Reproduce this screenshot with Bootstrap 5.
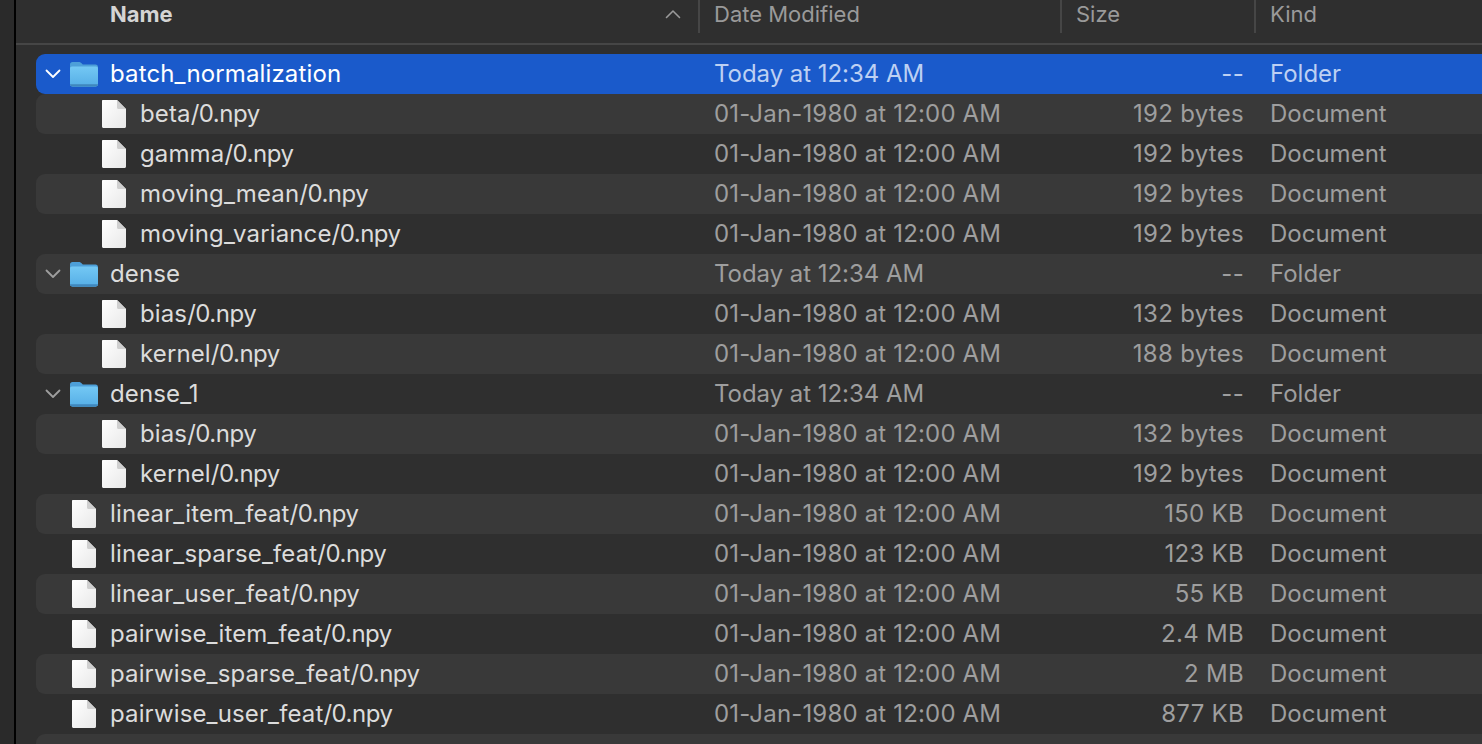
<!DOCTYPE html>
<html lang="en">
<head>
<meta charset="utf-8">
<title>Finder list</title>
<link href="https://cdn.jsdelivr.net/npm/bootstrap@5.3.0/dist/css/bootstrap.min.css" rel="stylesheet">
<style>
html,body{height:100%;overflow:hidden;background:#2f2f2f;}
body{font-family:Inter,"Liberation Sans",sans-serif;font-size:24px;color:#dcdcdc;letter-spacing:.13px;}
.fx-rail{width:16px;background:#2a2a2a;border-right:2px solid #000;flex:none;}
.fx-main{flex:1;min-width:0;}
.fx-head{height:45px;border-bottom:2px solid #464646;color:#9a9a9a;font-size:22px;padding-left:20px;letter-spacing:0;}
.fx-h{height:33px;display:flex;align-items:center;border-left:2px solid #464646;padding-left:14px;padding-bottom:5px;}
.fx-hname{width:662px;border:0;padding-left:74px;color:#d4d4d4;font-weight:700;justify-content:space-between;padding-right:17px;}
.fx-hdate{width:362px;}.fx-hsize{width:194px;}.fx-hkind{flex:1;}
.fx-list{padding-top:9px;padding-left:20px;}
.fx-row{height:40px;display:flex;align-items:center;border-radius:9px 0 0 9px;}
.fx-row:nth-child(even){background:#393939;}
.fx-sel{background:#1a5acb!important;color:#fff;}
.fx-sel .fx-dim{color:#bdd0f3;}
.fx-name{width:678px;display:flex;align-items:center;flex:none;}
.fx-chev{width:34px;flex:none;display:flex;justify-content:center;}
.fx-l0{padding-left:36px;}
.fx-l1{padding-left:66px;}
.fx-doc{margin-right:14px;flex:none;}
.fx-fold{margin-right:12px;flex:none;}
.fx-dim{color:#9e9e9e;}
.fx-date{width:389px;flex:none;letter-spacing:.17px;}
.fx-today{letter-spacing:-.04px;}
.fx-ext{letter-spacing:-.5px;}
.fx-size{width:141px;text-align:right;flex:none;letter-spacing:.3px;}
.fx-kind{padding-left:26px;letter-spacing:0;}
</style>
</head>
<body>
<svg width="0" height="0" class="position-absolute">
<defs>
<linearGradient id="gf" x1="0" y1="0" x2="0" y2="1"><stop offset="0" stop-color="#74c8f4"/><stop offset="1" stop-color="#55aee6"/></linearGradient>
<linearGradient id="gd" x1="0" y1="0" x2="1" y2="1"><stop offset="0" stop-color="#ffffff"/><stop offset="1" stop-color="#e8e8e8"/></linearGradient>
<symbol id="ic-folder" viewBox="0 0 28 28">
<path d="M0 4.500C0 3 1 2 2.500 2H9c1 0 1.600.4 2.300 1.100L12.800 4.500H25.500C27 4.500 28 5.500 28 7V24C28 25.500 27 26.500 25.500 26.500H2.500C1 26.500 0 25.500 0 24Z" fill="#4d9fd8"/>
<path d="M0 8.500C0 7.300.8 6.500 2 6.500H26C27.200 6.500 28 7.300 28 8.500V24C28 25.500 27 26.500 25.500 26.500H2.500C1 26.500 0 25.500 0 24Z" fill="url(#gf)"/>
<path d="M0 24.300C0 25.500 1 26.500 2.500 26.500H25.500C27 26.500 28 25.500 28 24.300Z" fill="#3f87bd"/>
</symbol>
<symbol id="ic-doc" viewBox="0 0 24 28">
<path d="M1 0H15L24 9V26.500C24 27.300 23.300 28 22.500 28H1.500C.7 28 0 27.300 0 26.500V1C0 .4.400 0 1 0Z" fill="url(#gd)"/>
<path d="M15 0L24 9H16.200C15.500 9 15 8.500 15 7.800Z" fill="#cfcfcf"/>
</symbol>
<symbol id="ic-chev" viewBox="0 0 16 10"><path d="M1.500 1.500L8 8L14.500 1.500" fill="none" stroke="currentColor" stroke-width="1.800" stroke-linecap="round" stroke-linejoin="round"/></symbol>
</defs>
</svg>
<div class="d-flex h-100">
<div class="fx-rail"></div>
<div class="fx-main">
<div class="fx-head d-flex w-100">
<div class="fx-h fx-hname"><span>Name</span><svg width="16" height="10" viewBox="0 0 16 10"><path d="M1.500 8.500L8 2L14.500 8.500" fill="none" stroke="#9a9a9a" stroke-width="1.600" stroke-linecap="round" stroke-linejoin="round"/></svg></div>
<div class="fx-h fx-hdate">Date Modified</div>
<div class="fx-h fx-hsize">Size</div>
<div class="fx-h fx-hkind">Kind</div>
</div>
<div class="fx-list">
<div class="fx-row fx-sel"><div class="fx-name"><span class="fx-chev"><svg width="16" height="10"><use href="#ic-chev"/></svg></span><svg class="fx-fold" width="28" height="28"><use href="#ic-folder"/></svg><span>batch_normalization</span></div><div class="fx-date fx-dim fx-today">Today at 12:34 AM</div><div class="fx-size fx-dim">--</div><div class="fx-kind fx-dim">Folder</div></div>
<div class="fx-row"><div class="fx-name fx-l1"><svg class="fx-doc" width="24" height="28"><use href="#ic-doc"/></svg><span>beta<span class="fx-ext">/0.npy</span></span></div><div class="fx-date fx-dim">01-Jan-1980 at 12:00 AM</div><div class="fx-size fx-dim">192 bytes</div><div class="fx-kind fx-dim">Document</div></div>
<div class="fx-row"><div class="fx-name fx-l1"><svg class="fx-doc" width="24" height="28"><use href="#ic-doc"/></svg><span>gamma<span class="fx-ext">/0.npy</span></span></div><div class="fx-date fx-dim">01-Jan-1980 at 12:00 AM</div><div class="fx-size fx-dim">192 bytes</div><div class="fx-kind fx-dim">Document</div></div>
<div class="fx-row"><div class="fx-name fx-l1"><svg class="fx-doc" width="24" height="28"><use href="#ic-doc"/></svg><span>moving_mean<span class="fx-ext">/0.npy</span></span></div><div class="fx-date fx-dim">01-Jan-1980 at 12:00 AM</div><div class="fx-size fx-dim">192 bytes</div><div class="fx-kind fx-dim">Document</div></div>
<div class="fx-row"><div class="fx-name fx-l1"><svg class="fx-doc" width="24" height="28"><use href="#ic-doc"/></svg><span>moving_variance<span class="fx-ext">/0.npy</span></span></div><div class="fx-date fx-dim">01-Jan-1980 at 12:00 AM</div><div class="fx-size fx-dim">192 bytes</div><div class="fx-kind fx-dim">Document</div></div>
<div class="fx-row"><div class="fx-name"><span class="fx-chev fx-dim"><svg width="16" height="10"><use href="#ic-chev"/></svg></span><svg class="fx-fold" width="28" height="28"><use href="#ic-folder"/></svg><span>dense</span></div><div class="fx-date fx-dim fx-today">Today at 12:34 AM</div><div class="fx-size fx-dim">--</div><div class="fx-kind fx-dim">Folder</div></div>
<div class="fx-row"><div class="fx-name fx-l1"><svg class="fx-doc" width="24" height="28"><use href="#ic-doc"/></svg><span>bias<span class="fx-ext">/0.npy</span></span></div><div class="fx-date fx-dim">01-Jan-1980 at 12:00 AM</div><div class="fx-size fx-dim">132 bytes</div><div class="fx-kind fx-dim">Document</div></div>
<div class="fx-row"><div class="fx-name fx-l1"><svg class="fx-doc" width="24" height="28"><use href="#ic-doc"/></svg><span>kernel<span class="fx-ext">/0.npy</span></span></div><div class="fx-date fx-dim">01-Jan-1980 at 12:00 AM</div><div class="fx-size fx-dim">188 bytes</div><div class="fx-kind fx-dim">Document</div></div>
<div class="fx-row"><div class="fx-name"><span class="fx-chev fx-dim"><svg width="16" height="10"><use href="#ic-chev"/></svg></span><svg class="fx-fold" width="28" height="28"><use href="#ic-folder"/></svg><span>dense_1</span></div><div class="fx-date fx-dim fx-today">Today at 12:34 AM</div><div class="fx-size fx-dim">--</div><div class="fx-kind fx-dim">Folder</div></div>
<div class="fx-row"><div class="fx-name fx-l1"><svg class="fx-doc" width="24" height="28"><use href="#ic-doc"/></svg><span>bias<span class="fx-ext">/0.npy</span></span></div><div class="fx-date fx-dim">01-Jan-1980 at 12:00 AM</div><div class="fx-size fx-dim">132 bytes</div><div class="fx-kind fx-dim">Document</div></div>
<div class="fx-row"><div class="fx-name fx-l1"><svg class="fx-doc" width="24" height="28"><use href="#ic-doc"/></svg><span>kernel<span class="fx-ext">/0.npy</span></span></div><div class="fx-date fx-dim">01-Jan-1980 at 12:00 AM</div><div class="fx-size fx-dim">192 bytes</div><div class="fx-kind fx-dim">Document</div></div>
<div class="fx-row"><div class="fx-name fx-l0"><svg class="fx-doc" width="24" height="28"><use href="#ic-doc"/></svg><span>linear_item_feat<span class="fx-ext">/0.npy</span></span></div><div class="fx-date fx-dim">01-Jan-1980 at 12:00 AM</div><div class="fx-size fx-dim">150 KB</div><div class="fx-kind fx-dim">Document</div></div>
<div class="fx-row"><div class="fx-name fx-l0"><svg class="fx-doc" width="24" height="28"><use href="#ic-doc"/></svg><span>linear_sparse_feat<span class="fx-ext">/0.npy</span></span></div><div class="fx-date fx-dim">01-Jan-1980 at 12:00 AM</div><div class="fx-size fx-dim">123 KB</div><div class="fx-kind fx-dim">Document</div></div>
<div class="fx-row"><div class="fx-name fx-l0"><svg class="fx-doc" width="24" height="28"><use href="#ic-doc"/></svg><span>linear_user_feat<span class="fx-ext">/0.npy</span></span></div><div class="fx-date fx-dim">01-Jan-1980 at 12:00 AM</div><div class="fx-size fx-dim">55 KB</div><div class="fx-kind fx-dim">Document</div></div>
<div class="fx-row"><div class="fx-name fx-l0"><svg class="fx-doc" width="24" height="28"><use href="#ic-doc"/></svg><span>pairwise_item_feat<span class="fx-ext">/0.npy</span></span></div><div class="fx-date fx-dim">01-Jan-1980 at 12:00 AM</div><div class="fx-size fx-dim">2.4 MB</div><div class="fx-kind fx-dim">Document</div></div>
<div class="fx-row"><div class="fx-name fx-l0"><svg class="fx-doc" width="24" height="28"><use href="#ic-doc"/></svg><span>pairwise_sparse_feat<span class="fx-ext">/0.npy</span></span></div><div class="fx-date fx-dim">01-Jan-1980 at 12:00 AM</div><div class="fx-size fx-dim">2 MB</div><div class="fx-kind fx-dim">Document</div></div>
<div class="fx-row"><div class="fx-name fx-l0"><svg class="fx-doc" width="24" height="28"><use href="#ic-doc"/></svg><span>pairwise_user_feat<span class="fx-ext">/0.npy</span></span></div><div class="fx-date fx-dim">01-Jan-1980 at 12:00 AM</div><div class="fx-size fx-dim">877 KB</div><div class="fx-kind fx-dim">Document</div></div>
<div class="fx-row"></div>
</div>
</div>
</div>
</body>
</html>
